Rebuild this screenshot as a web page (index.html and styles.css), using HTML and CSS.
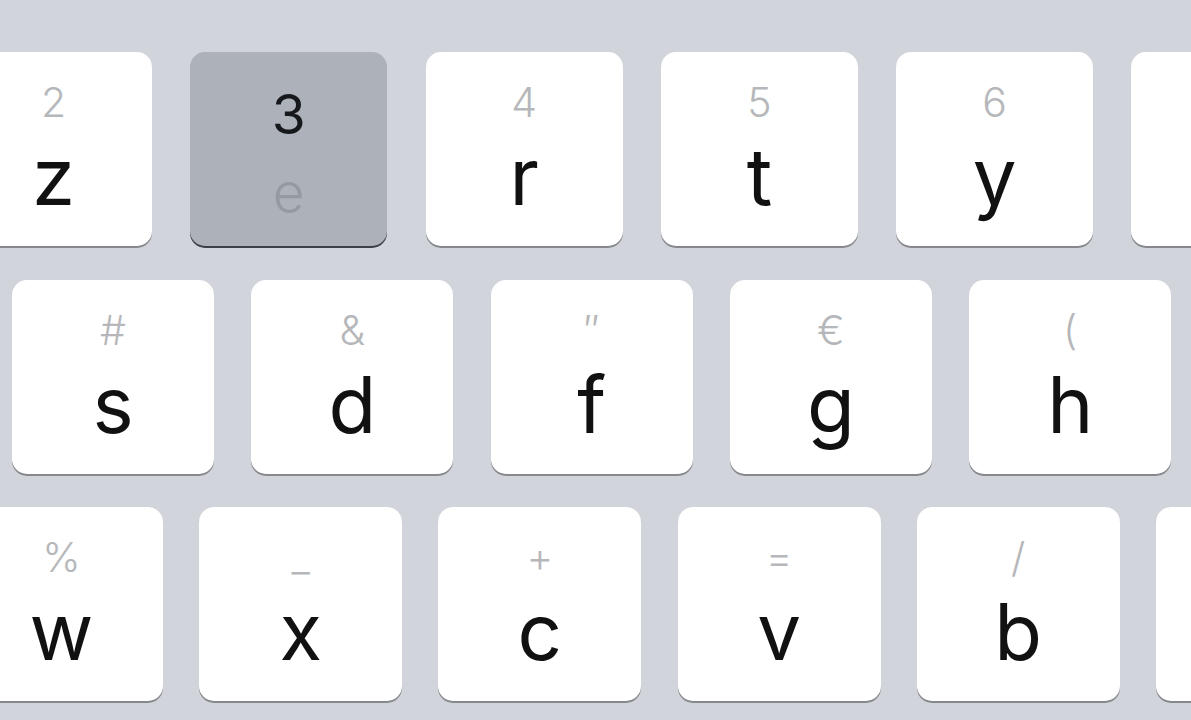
FILE: index.html
```html
<!DOCTYPE html>
<html lang="fr">
<head>
<meta charset="utf-8">
<title>Clavier</title>
<link rel="stylesheet" href="styles.css">
</head>
<body>
<div class="keyboard">
  <div class="row row-1">
    <div class="key"><span class="alt">2</span><span class="main">z</span></div>
    <div class="key pressed"><span class="alt-on">3</span><span class="main-off">e</span></div>
    <div class="key"><span class="alt">4</span><span class="main">r</span></div>
    <div class="key"><span class="alt">5</span><span class="main">t</span></div>
    <div class="key"><span class="alt">6</span><span class="main">y</span></div>
    <div class="key"></div>
  </div>
  <div class="row row-2">
    <div class="key"><span class="alt">#</span><span class="main">s</span></div>
    <div class="key"><span class="alt">&amp;</span><span class="main">d</span></div>
    <div class="key"><span class="alt">″</span><span class="main">f</span></div>
    <div class="key"><span class="alt">€</span><span class="main">g</span></div>
    <div class="key"><span class="alt">(</span><span class="main">h</span></div>
  </div>
  <div class="row row-3">
    <div class="key"><span class="alt">%</span><span class="main">w</span></div>
    <div class="key"><span class="alt">_</span><span class="main">x</span></div>
    <div class="key"><span class="alt">+</span><span class="main">c</span></div>
    <div class="key"><span class="alt">=</span><span class="main">v</span></div>
    <div class="key"><span class="alt">/</span><span class="main">b</span></div>
    <div class="key"></div>
  </div>
</div>
</body>
</html>
```

FILE: styles.css
```css
html, body {
  margin: 0;
  padding: 0;
  width: 1191px;
  height: 720px;
  overflow: hidden;
  background: #d1d4da;
}

.keyboard {
  display: flex;
  flex-direction: column;
  gap: 33.5px;
  padding-top: 52px;
  font-family: Inter, "Noto Sans", "Liberation Sans", sans-serif;
}

.row {
  display: flex;
  flex-wrap: nowrap;
  height: 194px;
}

.row-1 {
  margin-left: -45px;
  gap: 38.3px;
}

.row-1 .key {
  width: 197px;
}

.row-2 {
  margin-left: 12px;
  gap: 37.3px;
}

.row-2 .key {
  width: 202px;
}

.row-3 {
  margin-left: -40px;
  gap: 36.2px;
}

.row-3 .key {
  width: 203px;
}

.key {
  flex: none;
  height: 194px;
  background: #ffffff;
  border-radius: 15px;
  box-shadow: 0 2px 0 #86888d;
  display: flex;
  flex-direction: column;
  align-items: center;
  text-align: center;
}

.alt {
  display: block;
  margin-top: 30px;
  height: 41px;
  font-size: 41px;
  line-height: 41px;
  font-weight: 300;
  color: #b6b7ba;
}

.main {
  display: block;
  margin-top: 15px;
  height: 78px;
  font-size: 78px;
  line-height: 78px;
  font-weight: 400;
  color: #111111;
}

.pressed {
  background: #adb1b9;
  box-shadow: 0 2px 0 #3d4047;
}

.alt-on {
  display: block;
  margin-top: 35px;
  height: 55px;
  font-size: 55px;
  line-height: 55px;
  font-weight: 400;
  color: #16181b;
}

.main-off {
  display: block;
  margin-top: 23px;
  height: 55px;
  font-size: 55px;
  line-height: 55px;
  font-weight: 300;
  color: #959aa2;
}
```
